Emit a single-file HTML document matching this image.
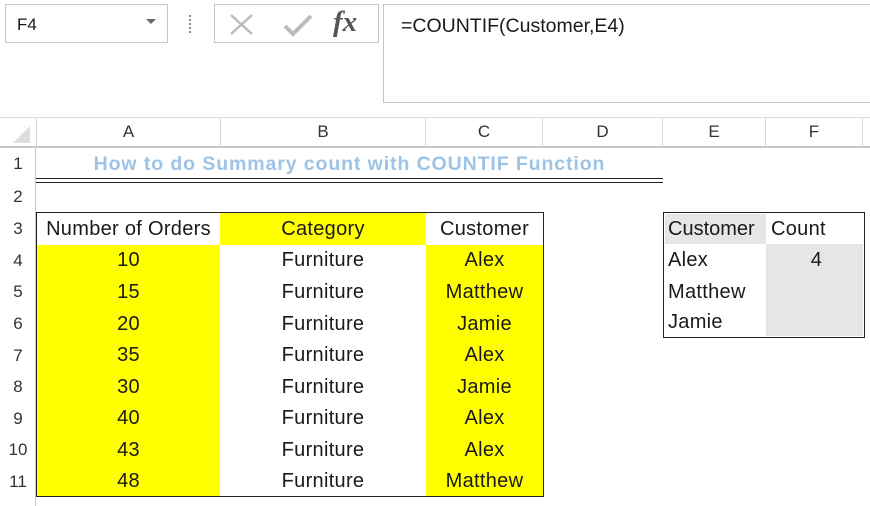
<!DOCTYPE html>
<html><head><style>
body{margin:0;width:870px;height:506px;background:#fff;position:relative;overflow:hidden;font-family:"Liberation Sans",sans-serif;color:#1a1a1a}
div{position:absolute;box-sizing:border-box}
.c{font-size:20px;letter-spacing:0.3px;display:flex;align-items:center;justify-content:center;white-space:nowrap}
.l{justify-content:flex-start;padding-left:4px}
.y{background:#ffff00}
.g{background:#e6e6e6}
.h{font-size:17px;color:#333;display:flex;align-items:center;justify-content:center;top:117px;height:30px;border-right:1px solid #d8d8d8}
.r{font-size:17px;color:#333;left:0;width:36px;display:flex;align-items:center;justify-content:center}
</style></head><body>
<div style="left:5px;top:4px;width:163px;height:39px;border:1px solid #c6c6c6;font-size:17px;padding:10px 0 0 11px">F4</div>
<div style="left:146px;top:19px;width:0;height:0;border-left:5px solid transparent;border-right:5px solid transparent;border-top:5px solid #666"></div>
<div style="left:189px;top:15px;width:3px;height:18px;border-left:2px dotted #888"></div>
<div style="left:214px;top:4px;width:165px;height:39px;border:1px solid #c6c6c6"></div>
<svg style="position:absolute;left:228px;top:12px" width="28" height="24"><path d="M3 3L24 22M24 3L3 22" stroke="#bbb" stroke-width="2.5"/></svg>
<svg style="position:absolute;left:282px;top:12px" width="32" height="26"><path d="M3 14L11 22L29 4" stroke="#bbb" stroke-width="4" fill="none"/></svg>
<div style="left:333px;top:6px;font-family:'Liberation Serif',serif;font-style:italic;font-weight:bold;font-size:29px;color:#555">fx</div>
<div style="left:383px;top:4px;width:490px;height:99px;border:1px solid #c6c6c6;font-size:19.5px;padding:10px 0 0 17px">=COUNTIF(Customer,E4)</div>
<div style="left:0;top:117px;width:870px;height:31px;border-top:1px solid #dcdcdc;border-bottom:2px solid #c8c8c8"></div>
<svg style="position:absolute;left:12px;top:126px" width="20" height="18"><path d="M18 0V17H1Z" fill="#ddd"/></svg>
<div class="h" style="left:36px;width:185px;border-left:1px solid #d8d8d8">A</div>
<div class="h" style="left:221px;width:205px">B</div>
<div class="h" style="left:426px;width:117px">C</div>
<div class="h" style="left:543px;width:120px">D</div>
<div class="h" style="left:663px;width:103px">E</div>
<div class="h" style="left:766px;width:97px">F</div>
<div style="left:35px;top:148px;width:1px;height:358px;background:#c8c8c8"></div>
<div class="r" style="top:148px;height:32px">1</div>
<div class="r" style="top:181px;height:32px">2</div>
<div class="r" style="top:213px;height:32px">3</div>
<div class="r" style="top:245px;height:31px">4</div>
<div class="r" style="top:276px;height:32px">5</div>
<div class="r" style="top:308px;height:32px">6</div>
<div class="r" style="top:340px;height:31px">7</div>
<div class="r" style="top:371px;height:32px">8</div>
<div class="r" style="top:403px;height:31px">9</div>
<div class="r" style="top:434px;height:32px">10</div>
<div class="r" style="top:466px;height:31px">11</div>
<div class="c" style="left:36px;top:148px;width:627px;height:32px;color:#9dc3e6;font-weight:bold;font-size:19.5px;letter-spacing:0.9px">How to do Summary count with COUNTIF Function</div>
<div style="left:36px;top:178px;width:627px;height:5px;border-top:1.5px solid #222;border-bottom:1.5px solid #222"></div>
<div style="left:36px;top:212px;width:508px;height:285px;border:1.5px solid #222"></div>
<div class="c" style="left:37px;top:213px;width:183px;height:32px">Number of Orders</div>
<div class="c y" style="left:220px;top:213px;width:206px;height:32px">Category</div>
<div class="c" style="left:426px;top:213px;width:117px;height:32px">Customer</div>
<div style="left:37px;top:245px;width:183px;height:251px" class="y"></div>
<div style="left:426px;top:245px;width:117px;height:251px" class="y"></div>

<div class="c" style="left:37px;top:245px;width:183px;height:31px">10</div><div class="c" style="left:220px;top:245px;width:206px;height:31px">Furniture</div><div class="c" style="left:426px;top:245px;width:117px;height:31px">Alex</div>
<div class="c" style="left:37px;top:276px;width:183px;height:32px">15</div><div class="c" style="left:220px;top:276px;width:206px;height:32px">Furniture</div><div class="c" style="left:426px;top:276px;width:117px;height:32px">Matthew</div>
<div class="c" style="left:37px;top:308px;width:183px;height:32px">20</div><div class="c" style="left:220px;top:308px;width:206px;height:32px">Furniture</div><div class="c" style="left:426px;top:308px;width:117px;height:32px">Jamie</div>
<div class="c" style="left:37px;top:340px;width:183px;height:31px">35</div><div class="c" style="left:220px;top:340px;width:206px;height:31px">Furniture</div><div class="c" style="left:426px;top:340px;width:117px;height:31px">Alex</div>
<div class="c" style="left:37px;top:371px;width:183px;height:32px">30</div><div class="c" style="left:220px;top:371px;width:206px;height:32px">Furniture</div><div class="c" style="left:426px;top:371px;width:117px;height:32px">Jamie</div>
<div class="c" style="left:37px;top:403px;width:183px;height:31px">40</div><div class="c" style="left:220px;top:403px;width:206px;height:31px">Furniture</div><div class="c" style="left:426px;top:403px;width:117px;height:31px">Alex</div>
<div class="c" style="left:37px;top:434px;width:183px;height:32px">43</div><div class="c" style="left:220px;top:434px;width:206px;height:32px">Furniture</div><div class="c" style="left:426px;top:434px;width:117px;height:32px">Alex</div>
<div class="c" style="left:37px;top:466px;width:183px;height:31px">48</div><div class="c" style="left:220px;top:466px;width:206px;height:31px">Furniture</div><div class="c" style="left:426px;top:466px;width:117px;height:31px">Matthew</div>

<div style="left:663px;top:212px;width:202px;height:126px;border:1.5px solid #222"></div>
<div class="c l g" style="left:665px;top:214px;width:101px;height:30px;padding-left:3px;letter-spacing:0">Customer</div>
<div class="c l" style="left:766px;top:214px;width:97px;height:30px;padding-left:5px">Count</div>
<div class="g" style="left:766px;top:244px;width:97px;height:92px"></div>
<div class="c l" style="left:665px;top:245px;width:101px;height:31px;padding-left:3px">Alex</div>
<div class="c" style="left:766px;top:245px;width:97px;height:31px;padding-left:4px">4</div>
<div class="c l" style="left:665px;top:276px;width:101px;height:32px;padding-left:3px">Matthew</div>
<div class="c l" style="left:665px;top:308px;width:101px;height:29px;padding-left:3px">Jamie</div>
</body></html>
